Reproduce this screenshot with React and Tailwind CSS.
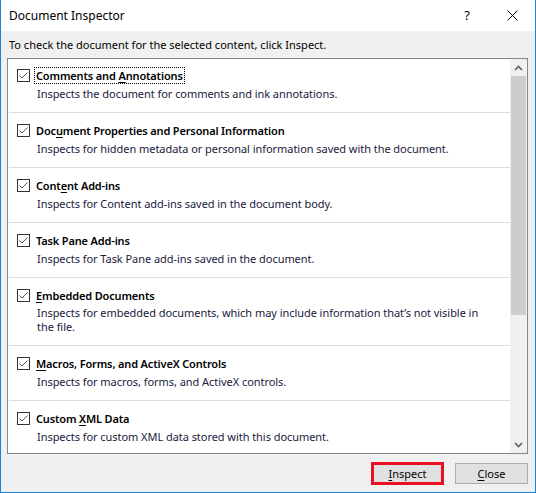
import React from 'react';

const ITEMS = [
  { pre: 'Comments and ', key: 'A', post: 'nnotations', desc: 'Inspects the document for comments and ink annotations.', focus: true },
  { pre: 'Doc', key: 'u', post: 'ment Properties and Personal Information', desc: 'Inspects for hidden metadata or personal information saved with the document.' },
  { pre: 'Cont', key: 'e', post: 'nt Add-ins', desc: 'Inspects for Content add-ins saved in the document body.' },
  { pre: 'Task Pane Add-ins', key: '', post: '', desc: 'Inspects for Task Pane add-ins saved in the document.' },
  { pre: '', key: 'E', post: 'mbedded Documents', desc: ['Inspects for embedded documents, which may include information that\u2019s not visible in', 'the file.'] },
  { pre: '', key: 'M', post: 'acros, Forms, and ActiveX Controls', desc: 'Inspects for macros, forms, and ActiveX controls.' },
  { pre: 'Custom ', key: 'X', post: 'ML Data', desc: 'Inspects for custom XML data stored with this document.' },
];

function CheckBox() {
  return (
    <div className="w-[13px] h-[13px] shrink-0 border border-[#333333] bg-white flex items-center justify-center">
      <svg width="11" height="11" viewBox="0 0 11 11">
        <path d="M1.5 5.5 L4 8 L9.5 2.5" fill="none" stroke="#555555" strokeWidth="1" />
      </svg>
    </div>
  );
}

function Chevron({ up }) {
  return (
    <svg width="9" height="6" viewBox="0 0 9 6">
      <path d={up ? 'M1 5 L4.5 1.5 L8 5' : 'M1 1 L4.5 4.5 L8 1'} fill="none" stroke="#606060" strokeWidth="1.6" />
    </svg>
  );
}

function Item({ item }) {
  const multi = Array.isArray(item.desc);
  return (
    <div className={`pl-[8px] pt-[9px] first:pt-[8px] border-b border-[#dcdcdc] ${multi ? 'pb-[11px]' : 'pb-[12px]'}`}>
      <div className="flex items-center h-4">
        <CheckBox />
        <div className={`ml-[5px] px-[1px] leading-[15px] font-semibold tracking-[-0.15px] text-black whitespace-nowrap ${item.focus ? 'outline outline-1 outline-dotted outline-black' : ''}`}>
          {item.pre}
          {item.key && <span className="underline underline-offset-2">{item.key}</span>}
          {item.post}
        </div>
      </div>
      {multi ? (
        <div className="ml-[20px] mt-[3px] text-[#20203c] tracking-[-0.05px] whitespace-nowrap">
          {item.desc.map((l) => (
            <div key={l} className="leading-[14px]">{l}</div>
          ))}
        </div>
      ) : (
        <div className="ml-[20px] mt-[4px] leading-[13px] text-[#20203c] tracking-[-0.05px] whitespace-nowrap">{item.desc}</div>
      )}
    </div>
  );
}

export default function App() {
  return (
    <div
      className="w-[536px] h-[493px] bg-[#f0f0f0] border-x border-b border-[#1883d7] flex flex-col text-[11px] text-black overflow-hidden"
      style={{ fontFamily: '"Noto Sans", sans-serif' }}
    >
      {/* Title bar */}
      <div className="h-[31px] bg-white flex items-center shrink-0">
        <span className="ml-[8px] text-[12px] text-black">Document Inspector</span>
        <span className="ml-auto mr-[37px] text-[13px] text-black">?</span>
        <svg className="mr-[17px]" width="11" height="11" viewBox="0 0 11 11">
          <path d="M0.5 0.5 L10.5 10.5 M10.5 0.5 L0.5 10.5" stroke="#000" strokeWidth="1" />
        </svg>
      </div>

      <div className="pl-[8px] pt-[6px] leading-4 whitespace-nowrap">
        To check the document for the selected content, click Inspect.
      </div>

      {/* List box */}
      <div className="ml-[6px] mr-[7px] mt-[5px] h-[396px] border border-[#828790] bg-white flex overflow-hidden">
        <div className="flex-1 pl-[1px] overflow-hidden">
          {ITEMS.map((item, i) => (
            <Item key={i} item={item} />
          ))}
        </div>
        <div className="w-[17px] bg-[#f0f0f0] flex flex-col">
          <div className="h-[17px] flex items-center justify-center">
            <Chevron up />
          </div>
          <div className="h-[239px] mx-[1px] bg-[#cdcdcd]" />
          <div className="flex-1" />
          <div className="h-[17px] flex items-center justify-center">
            <Chevron />
          </div>
        </div>
      </div>

      {/* Buttons */}
      <div className="flex justify-end items-center mt-[8px] mr-[7px] gap-[11px]">
        <button className="w-[73px] h-[23px] border-[3px] border-[#e81123] bg-[#e1e1e1] text-black leading-none">
          <span className="underline underline-offset-2">I</span>nspect
        </button>
        <button className="w-[73px] h-[21px] border border-[#adadad] bg-[#e1e1e1] text-black leading-none">
          <span className="underline underline-offset-2">C</span>lose
        </button>
      </div>
    </div>
  );
}
